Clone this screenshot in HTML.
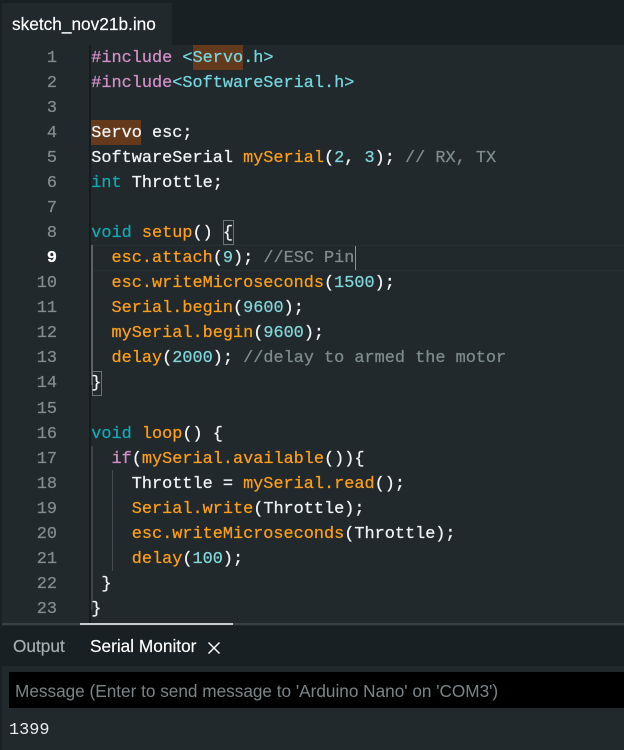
<!DOCTYPE html>
<html>
<head>
<meta charset="utf-8">
<style>
html,body{margin:0;padding:0;background:#21292c;}
body{width:624px;height:750px;position:relative;overflow:hidden;}
.abs{position:absolute;}
#top{left:0;top:0;width:624px;height:45px;background:#192023;}
#tab{left:2px;top:3px;width:170px;height:42px;background:#21292c;}
#tabt{left:12px;top:13px;font:17.25px/22px "Liberation Sans",sans-serif;color:#fff;white-space:nowrap;-webkit-text-stroke:0.15px #fff;}
#leftstrip{left:0;top:0;width:2px;height:750px;background:#1a2124;}
#gut{left:89px;top:45px;width:2px;height:579px;background:#151b1e;}
.n,.l{position:absolute;font:16.88px/25px "Liberation Mono",monospace;white-space:pre;height:25px;margin-top:1px;-webkit-text-stroke:0.25px;}
.n{left:20px;width:37px;text-align:right;color:#848b8c;}
.l{left:91.3px;color:#f0f4f4;}
.p{color:#d38fc8}.h{color:#74d6de}.k{color:#12a9b2}.f{color:#fd9f19}.c{color:#7f8c8d}.d{color:#82d6da}
.g{position:absolute;background:#454c4f;width:1px;}
.b{position:absolute;border:1px solid #6b7375;box-sizing:border-box;}
#panel{left:0;top:626px;width:624px;height:40px;background:#192023;}
#sep{left:2px;top:623px;width:622px;height:2px;background:#3a4144;}
#act{left:80px;top:623px;width:153px;height:2px;background:#c8cccc;}
.t{position:absolute;top:635px;font:17.25px/22px "Liberation Sans",sans-serif;white-space:nowrap;-webkit-text-stroke:0.15px;}
#msg{left:9px;top:672px;width:615px;height:36px;background:#000;}
#msgt{left:15px;top:680px;font:17.2px/22px "Liberation Sans",sans-serif;color:#7b8487;white-space:nowrap;}
#out{left:9px;top:718px;font:16.88px/25px "Liberation Mono",monospace;color:#e8eded;}
</style>
</head>
<body>
<div class="abs" id="top"></div>
<div class="abs" id="tab"></div>
<div class="abs" id="tabt">sketch_nov21b.ino</div>
<div class="abs" id="leftstrip"></div>
<div class="abs" id="gut"></div>

<div class="abs" style="left:91px;top:245px;width:533px;height:1px;background:#283033;"></div>
<div class="abs" style="left:91px;top:270px;width:533px;height:1px;background:#283033;"></div>

<div class="abs" style="left:193px;top:45px;width:50px;height:25px;background:#653a1c;"></div>
<div class="abs" style="left:91px;top:120px;width:50px;height:25px;background:#653a1c;"></div>

<div class="g" style="left:91px;top:245px;height:140px;width:2px;background:#5a6265;"></div>
<div class="g" style="left:91px;top:446px;height:164px;width:2px;background:#3c4447;"></div>
<div class="g" style="left:112px;top:470px;height:101px;"></div>

<div class="b" style="left:223px;top:220px;width:11px;height:25px;"></div>
<div class="b" style="left:92px;top:371px;width:10px;height:25px;"></div>
<div class="abs" style="left:355px;top:246px;width:1px;height:24px;background:#8a9294;"></div>

<div class="n" style="top:45px">1</div><div class="l" style="top:45px"><span class="p">#include</span> <span class="h">&lt;Servo.h&gt;</span></div>
<div class="n" style="top:70px">2</div><div class="l" style="top:70px"><span class="p">#include</span><span class="h">&lt;SoftwareSerial.h&gt;</span></div>
<div class="n" style="top:95px">3</div>
<div class="n" style="top:120px">4</div><div class="l" style="top:120px">Servo esc;</div>
<div class="n" style="top:145px">5</div><div class="l" style="top:145px">SoftwareSerial <span class="f">mySerial</span>(<span class="d">2</span>, <span class="d">3</span>); <span class="c">// RX, TX</span></div>
<div class="n" style="top:170px">6</div><div class="l" style="top:170px"><span class="k">int</span> Throttle;</div>
<div class="n" style="top:195px">7</div>
<div class="n" style="top:220px">8</div><div class="l" style="top:220px"><span class="k">void</span> <span class="f">setup</span>() {</div>
<div class="n" style="top:245px;color:#fff;font-weight:bold">9</div><div class="l" style="top:245px">  <span class="f">esc.attach</span>(<span class="d">9</span>); <span class="c">//ESC Pin</span></div>
<div class="n" style="top:270px">10</div><div class="l" style="top:270px">  <span class="f">esc.writeMicroseconds</span>(<span class="d">1500</span>);</div>
<div class="n" style="top:295px">11</div><div class="l" style="top:295px">  <span class="f">Serial.begin</span>(<span class="d">9600</span>);</div>
<div class="n" style="top:320px">12</div><div class="l" style="top:320px">  <span class="f">mySerial.begin</span>(<span class="d">9600</span>);</div>
<div class="n" style="top:345px">13</div><div class="l" style="top:345px">  <span class="f">delay</span>(<span class="d">2000</span>); <span class="c">//delay to armed the motor</span></div>
<div class="n" style="top:370px">14</div><div class="l" style="top:370px">}</div>
<div class="n" style="top:396px">15</div>
<div class="n" style="top:421px">16</div><div class="l" style="top:421px"><span class="k">void</span> <span class="f">loop</span>() {</div>
<div class="n" style="top:446px">17</div><div class="l" style="top:446px">  <span class="p">if</span>(<span class="f">mySerial.available</span>()){</div>
<div class="n" style="top:471px">18</div><div class="l" style="top:471px">    Throttle = <span class="f">mySerial.read</span>();</div>
<div class="n" style="top:496px">19</div><div class="l" style="top:496px">    <span class="f">Serial.write</span>(Throttle);</div>
<div class="n" style="top:521px">20</div><div class="l" style="top:521px">    <span class="f">esc.writeMicroseconds</span>(Throttle);</div>
<div class="n" style="top:546px">21</div><div class="l" style="top:546px">    <span class="f">delay</span>(<span class="d">100</span>);</div>
<div class="n" style="top:571px">22</div><div class="l" style="top:571px"> }</div>
<div class="n" style="top:596px">23</div><div class="l" style="top:596px">}</div>

<div class="abs" id="panel"></div>
<div class="abs" id="sep"></div>
<div class="abs" id="act"></div>
<div class="t" style="left:13px;color:#a9b0b2">Output</div>
<div class="t" style="left:90px;color:#fff">Serial Monitor</div>
<svg class="abs" style="left:207px;top:641px" width="14" height="14" viewBox="0 0 14 14"><path d="M1.5 1.5L12.5 12.5M12.5 1.5L1.5 12.5" stroke="#fff" stroke-width="1.5" fill="none"/></svg>
<div class="abs" id="msg"></div>
<div class="abs" id="msgt">Message (Enter to send message to 'Arduino Nano' on 'COM3')</div>
<div class="abs" id="out">1399</div>
</body>
</html>
